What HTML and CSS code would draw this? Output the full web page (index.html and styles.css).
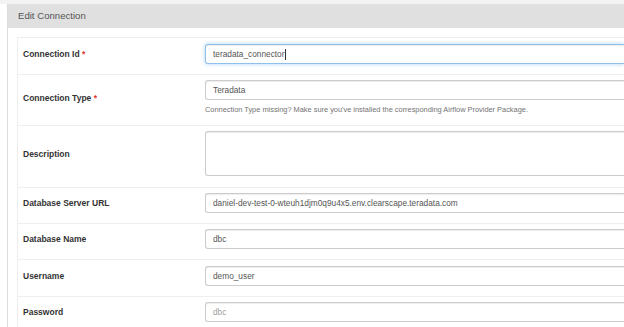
FILE: index.html
```html
<!DOCTYPE html>
<html>
<head>
<meta charset="utf-8">
<link rel="stylesheet" href="styles.css">
</head>
<body>
<div class="topstrip"></div>
<div class="panel">
  <div class="panel-heading">Edit Connection</div>
  <div class="panel-body">
    <table class="form-table">
      <tr class="r1">
        <td class="lbl">Connection Id <span class="req">*</span></td>
        <td class="fld"><div class="input focus">teradata_connector<span class="caret"></span></div></td>
      </tr>
      <tr>
        <td class="lbl">Connection Type <span class="req">*</span></td>
        <td class="fld"><div class="input select">Teradata</div><div class="help">Connection Type missing? Make sure you've installed the corresponding Airflow Provider Package.</div></td>
      </tr>
      <tr class="r3">
        <td class="lbl">Description</td>
        <td class="fld"><div class="input textarea"></div></td>
      </tr>
      <tr>
        <td class="lbl">Database Server URL</td>
        <td class="fld"><div class="input">daniel-dev-test-0-wteuh1djm0q9u4x5.env.clearscape.teradata.com</div></td>
      </tr>
      <tr>
        <td class="lbl">Database Name</td>
        <td class="fld"><div class="input">dbc</div></td>
      </tr>
      <tr class="r1">
        <td class="lbl">Username</td>
        <td class="fld"><div class="input">demo_user</div></td>
      </tr>
      <tr>
        <td class="lbl">Password</td>
        <td class="fld"><div class="input placeholder">dbc</div></td>
      </tr>
    </table>
  </div>
</div>
</body>
</html>
```
FILE: styles.css
```css
html, body {
  margin: 0;
  padding: 0;
  background: #fff;
  font-family: "Liberation Sans", Arial, sans-serif;
  overflow: hidden;
}
.topstrip {
  height: 4px;
  background: #f3f3f3;
}
.panel {
  margin-left: 7px;
  border-left: 1px solid #dcdcdc;
}
.panel-heading {
  height: 24px;
  line-height: 24px;
  background: #e0e0e0;
  padding-left: 10px;
  font-size: 9.6px;
  color: #555;
}
.panel-body {
  padding: 9px 0 0 9px;
}
.form-table {
  border-collapse: collapse;
  width: 100%;
  border-left: 1px solid #eee;
}
.form-table td {
  border-top: 1px solid #efefef;
  padding: 5px 0 10px 5px;
  vertical-align: middle;
}
.form-table tr.r1 td {
  padding-top: 6px;
}
.form-table tr.r3 td {
  padding-bottom: 11px;
}
.lbl {
  width: 182px;
  font-size: 8.5px;
  font-weight: bold;
  color: #333;
}
.req {
  color: #e0302e;
}
.form-table td.fld {
  padding-left: 0;
}
.input {
  box-sizing: border-box;
  height: 20px;
  line-height: 18px;
  border: 1px solid #ccc;
  border-right: none;
  border-radius: 3px 0 0 3px;
  box-shadow: inset 0 1px 1px rgba(0,0,0,0.075);
  padding-left: 7px;
  font-size: 8.3px;
  color: #555;
  white-space: nowrap;
}
.input.focus {
  border-color: #8fc0ea;
  box-shadow: inset 0 1px 1px rgba(0,0,0,0.075), 0 0 4px rgba(102,175,233,0.55);
}
.caret {
  display: inline-block;
  width: 1px;
  height: 11px;
  background: #333;
  vertical-align: middle;
}
.input.textarea {
  height: 45px;
}
.input.placeholder {
  color: #a0a0a0;
}
.help {
  margin-top: 4px;
  line-height: 11px;
  font-size: 7.4px;
  color: #737373;
  white-space: nowrap;
}
```
